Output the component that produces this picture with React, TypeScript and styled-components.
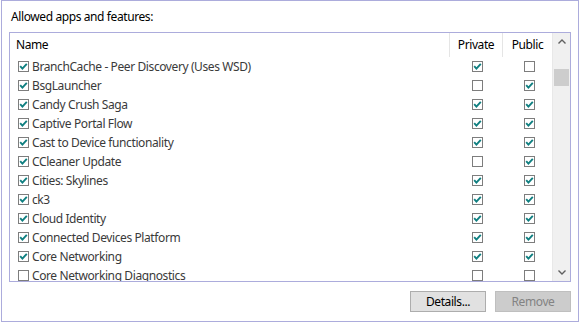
import React from 'react';
import styled, { createGlobalStyle } from 'styled-components';

const GlobalStyle = createGlobalStyle`
  html, body {
    margin: 0;
    padding: 0;
    background: #ffffff;
  }
  body {
    font-family: "Noto Sans", "Open Sans", sans-serif;
    font-size: 12px;
    letter-spacing: -0.4px;
    color: #000;
  }
`;

const Frame = styled.div`
  width: 578px;
  height: 322px;
  margin-left: 1px;
  box-sizing: border-box;
  border: 1px solid #acacdc;
  display: flex;
  flex-direction: column;
  padding: 0 7px;
`;

const Title = styled.div`
  height: 31px;
  padding-left: 2px;
  line-height: 31px;
  color: #000;
`;

const ListBox = styled.div`
  height: 250px;
  box-sizing: border-box;
  border: 1px solid #acacdc;
  display: flex;
  overflow: hidden;
`;

const ListContent = styled.div`
  flex: 1;
  display: flex;
  flex-direction: column;
  overflow: hidden;
`;

const HeaderRow = styled.div`
  height: 24px;
  flex: none;
  display: flex;
  align-items: stretch;
  color: #000;
`;

const HeaderCell = styled.div<{ $w?: number }>`
  ${p => (p.$w ? `width: ${p.$w}px; justify-content: center; border-left: 1px solid #e5e5e5;` : 'flex: 1; padding-left: 6px;')}
  display: flex;
  align-items: center;
  box-sizing: border-box;
  padding-bottom: 1px;
`;

const Row = styled.div`
  height: 19px;
  flex: none;
  display: flex;
  align-items: center;
`;

const NameCell = styled.div`
  flex: 1;
  display: flex;
  align-items: center;
  gap: 3px;
  padding-left: 8px;
  color: #3a3a3a;
  white-space: nowrap;
`;

const BoxCell = styled.div<{ $w: number }>`
  width: ${p => p.$w}px;
  display: flex;
  justify-content: center;
  padding-left: 4px;
  box-sizing: border-box;
`;

const Box = styled.span`
  width: 11px;
  height: 11px;
  box-sizing: border-box;
  border: 1px solid #7d7d7d;
  background: #fff;
  display: inline-flex;
  align-items: center;
  justify-content: center;
  flex: none;
`;

const ScrollBar = styled.div`
  width: 17px;
  flex: none;
  background: #f0f0f0;
  border-left: 1px solid #e8e8e8;
  display: flex;
  flex-direction: column;
`;

const ArrowButton = styled.div`
  height: 17px;
  display: flex;
  align-items: center;
  justify-content: center;
  flex: none;
`;

const Track = styled.div`
  flex: 1;
  padding-top: 19px;
  display: flex;
  justify-content: center;
`;

const Thumb = styled.div`
  width: 15px;
  height: 17px;
  background: #cdcdcd;
`;

const ButtonRow = styled.div`
  display: flex;
  justify-content: flex-end;
  gap: 9px;
  margin-top: 9px;
`;

const Button = styled.button<{ $disabled?: boolean }>`
  width: 76px;
  height: 21px;
  box-sizing: border-box;
  font-family: inherit;
  font-size: 12px;
  letter-spacing: inherit;
  padding: 0 0 1px;
  border: 1px solid ${p => (p.$disabled ? '#bfbfbf' : '#adadad')};
  background: ${p => (p.$disabled ? '#cccccc' : '#e1e1e1')};
  color: ${p => (p.$disabled ? '#838383' : '#000')};
`;

const Check: React.FC<{ on: boolean }> = ({ on }) => (
  <Box>
    {on && (
      <svg width="9" height="9" viewBox="0 0 9 9">
        <path d="M1.2 4.2 L3.4 6.6 L7.8 1.8" fill="none" stroke="#0f7f80" strokeWidth="1.9" />
      </svg>
    )}
  </Box>
);

const Chevron: React.FC<{ up?: boolean }> = ({ up }) => (
  <svg width="8" height="5" viewBox="0 0 8 5">
    <path d={up ? 'M0.5 4.5 L4 1 L7.5 4.5' : 'M0.5 0.5 L4 4 L7.5 0.5'} fill="none" stroke="#606060" strokeWidth="1.4" />
  </svg>
);

const apps: [string, boolean, boolean, boolean][] = [
  ['BranchCache - Peer Discovery (Uses WSD)', true, true, false],
  ['BsgLauncher', true, false, true],
  ['Candy Crush Saga', true, true, true],
  ['Captive Portal Flow', true, true, true],
  ['Cast to Device functionality', true, true, true],
  ['CCleaner Update', true, false, true],
  ['Cities: Skylines', true, true, true],
  ['ck3', true, true, true],
  ['Cloud Identity', true, true, true],
  ['Connected Devices Platform', true, true, true],
  ['Core Networking', true, true, true],
  ['Core Networking Diagnostics', false, false, false],
];

const App: React.FC = () => (
  <>
    <GlobalStyle />
    <Frame>
      <Title>Allowed apps and features:</Title>
      <ListBox>
        <ListContent>
          <HeaderRow>
            <HeaderCell>Name</HeaderCell>
            <HeaderCell $w={53}>Private</HeaderCell>
            <HeaderCell $w={50}>Public</HeaderCell>
          </HeaderRow>
          {apps.map(([name, on, priv, pub]) => (
            <Row key={name}>
              <NameCell>
                <Check on={on} />
                {name}
              </NameCell>
              <BoxCell $w={53}>
                <Check on={priv} />
              </BoxCell>
              <BoxCell $w={50}>
                <Check on={pub} />
              </BoxCell>
            </Row>
          ))}
        </ListContent>
        <ScrollBar>
          <ArrowButton>
            <Chevron up />
          </ArrowButton>
          <Track>
            <Thumb />
          </Track>
          <ArrowButton>
            <Chevron />
          </ArrowButton>
        </ScrollBar>
      </ListBox>
      <ButtonRow>
        <Button>Details...</Button>
        <Button $disabled>Remove</Button>
      </ButtonRow>
    </Frame>
  </>
);

export default App;
